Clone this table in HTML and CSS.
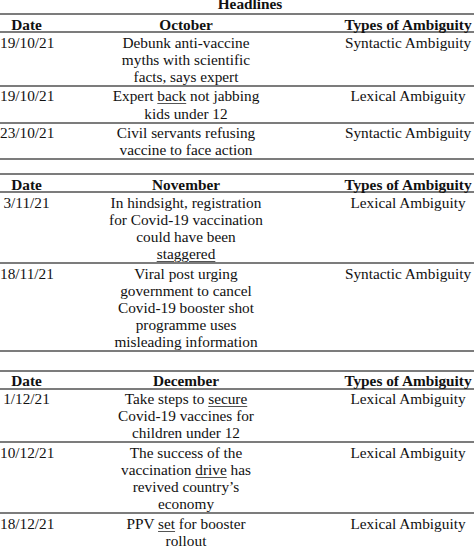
FILE: index.html
```html
<!DOCTYPE html>
<html>
<head>
<meta charset="utf-8">
<link rel="stylesheet" href="styles.css">
</head>
<body>
<div class="page">
  <div class="title">Headlines</div>

  <div class="table t1">
    <div class="row head">
      <div class="c1">Date</div>
      <div class="c2">October</div>
      <div class="c3">Types of Ambiguity</div>
    </div>
    <div class="row">
      <div class="c1">19/10/21</div>
      <div class="c2">Debunk anti-vaccine myths with scientific facts, says expert</div>
      <div class="c3">Syntactic Ambiguity</div>
    </div>
    <div class="row">
      <div class="c1">19/10/21</div>
      <div class="c2">Expert <u>back</u> not jabbing kids under 12</div>
      <div class="c3">Lexical Ambiguity</div>
    </div>
    <div class="row">
      <div class="c1">23/10/21</div>
      <div class="c2">Civil servants refusing vaccine to face action</div>
      <div class="c3">Syntactic Ambiguity</div>
    </div>
  </div>

  <div class="table t2">
    <div class="row head">
      <div class="c1">Date</div>
      <div class="c2">November</div>
      <div class="c3">Types of Ambiguity</div>
    </div>
    <div class="row">
      <div class="c1">3/11/21</div>
      <div class="c2">In hindsight, registration for Covid-19 vaccination could have been <u>staggered</u></div>
      <div class="c3">Lexical Ambiguity</div>
    </div>
    <div class="row">
      <div class="c1">18/11/21</div>
      <div class="c2">Viral post urging government to cancel Covid-19 booster shot programme uses misleading information</div>
      <div class="c3">Syntactic Ambiguity</div>
    </div>
  </div>

  <div class="table t3">
    <div class="row head">
      <div class="c1">Date</div>
      <div class="c2">December</div>
      <div class="c3">Types of Ambiguity</div>
    </div>
    <div class="row">
      <div class="c1">1/12/21</div>
      <div class="c2">Take steps to <u>secure</u> Covid-19 vaccines for children under 12</div>
      <div class="c3">Lexical Ambiguity</div>
    </div>
    <div class="row">
      <div class="c1">10/12/21</div>
      <div class="c2">The success of the vaccination <u>drive</u> has revived country’s economy</div>
      <div class="c3">Lexical Ambiguity</div>
    </div>
    <div class="row">
      <div class="c1">18/12/21</div>
      <div class="c2">PPV <u>set</u> for booster rollout</div>
      <div class="c3">Lexical Ambiguity</div>
    </div>
  </div>
</div>
</body>
</html>
```

FILE: styles.css
```css
html, body {
  margin: 0;
  padding: 0;
  overflow: hidden;
  background: #ffffff;
}

.page {
  width: 474px;
  font-family: "Liberation Serif", "Times New Roman", serif;
  font-size: 15.3px;
  line-height: 17.1px;
  color: #111111;
}

.title {
  margin-top: -5.5px;
  padding-left: 26px;
  line-height: 17.7px;
  text-align: center;
  font-weight: bold;
}

.table {
  border-top: 2px solid #7c7c7c;
}

.t1 {
  margin-top: 1px;
}

.t2 {
  margin-top: 13px;
}

.t3 {
  margin-top: 17.5px;
}

.row {
  display: grid;
  grid-template-columns: 53px 158px 1fr;
  column-gap: 54px;
  padding-top: 0.5px;
  border-bottom: 2px solid #7c7c7c;
}

.row.head {
  padding-top: 2.5px;
  line-height: 13.5px;
  font-weight: bold;
}

.c1 {
  text-align: center;
  white-space: nowrap;
}

.c2 {
  text-align: center;
}

.c3 {
  padding-left: 23px;
  text-align: center;
  white-space: nowrap;
}

u {
  text-decoration-color: #555555;
  text-decoration-thickness: 1px;
  text-underline-offset: 2px;
}
```
